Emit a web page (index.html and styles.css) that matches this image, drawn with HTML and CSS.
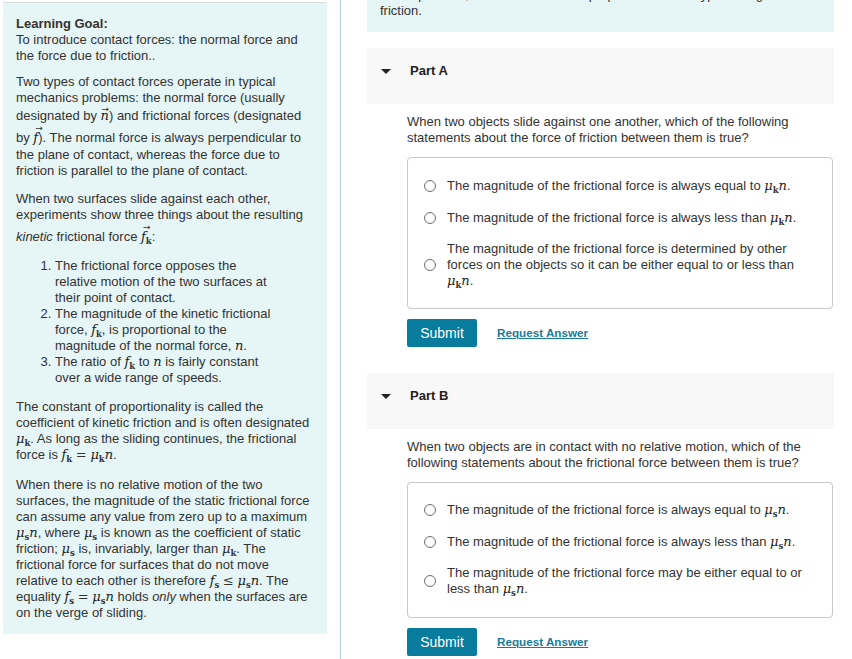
FILE: index.html
```html
<!DOCTYPE html>
<html lang="en">
<head>
<meta charset="utf-8">
<title>Contact forces</title>
<link rel="stylesheet" href="styles.css">
</head>
<body>
<div class="page">
  <aside class="left">
    <div class="goal">
      <p class="intro"><b>Learning Goal:</b><br>To introduce contact forces: the normal force and the force due to friction..</p>
      <p>Two types of contact forces operate in typical mechanics problems: the normal force (usually designated by <span class="vec"><span class="mi">n</span></span>) and frictional forces (designated by <span class="vec vec-f"><span class="mi">f</span></span>). The normal force is always perpendicular to the plane of contact, whereas the force due to friction is parallel to the plane of contact.</p>
      <p>When two surfaces slide against each other, experiments show three things about the resulting <i>kinetic</i> frictional force <span class="vec vec-f"><span class="mi">f</span></span><sub>k</sub>:</p>
      <ol class="facts">
        <li>The frictional force opposes the relative motion of the two surfaces at their point of contact.</li>
        <li>The magnitude of the kinetic frictional force, <span class="mi">f</span><sub>k</sub>, is proportional to the magnitude of the normal force, <span class="mi">n</span>.</li>
        <li>The ratio of <span class="mi">f</span><sub>k</sub> to <span class="mi">n</span> is fairly constant over a wide range of speeds.</li>
      </ol>
      <p class="kinetic">The constant of proportionality is called the coefficient of kinetic friction and is often designated <span class="mi">μ</span><sub>k</sub>. As long as the sliding continues, the frictional force is <span class="mi">f</span><sub>k</sub> <span class="mo">=</span> <span class="mi">μ</span><sub>k</sub><span class="mi">n</span>.</p>
      <p>When there is no relative motion of the two surfaces, the magnitude of the static frictional force can assume any value from zero up to a maximum <span class="mi">μ</span><sub>s</sub><span class="mi">n</span>, where <span class="mi">μ</span><sub>s</sub> is known as the coefficient of static friction; <span class="mi">μ</span><sub>s</sub> is, invariably, larger than <span class="mi">μ</span><sub>k</sub>. The frictional force for surfaces that do not move relative to each other is therefore <span class="mi">f</span><sub>s</sub> <span class="mo">≤</span> <span class="mi">μ</span><sub>s</sub><span class="mi">n</span>. The equality <span class="mi">f</span><sub>s</sub> <span class="mo">=</span> <span class="mi">μ</span><sub>s</sub><span class="mi">n</span> holds <i>only</i> when the surfaces are on the verge of sliding.</p>
    </div>
  </aside>

  <main class="right">
    <div class="note">
      <p>In this problem, we will examine the properties and the typical magnitudes of</p>
      <p>friction.</p>
    </div>

    <section class="part">
      <div class="part-head"><span class="tri"></span>Part A</div>
      <div class="part-body">
        <p class="q">When two objects slide against one another, which of the following statements about the force of friction between them is true?</p>
        <div class="options options-a">
          <label class="opt"><span class="radio"></span><span class="opt-text">The magnitude of the frictional force is always equal to <span class="mi">μ</span><sub>k</sub><span class="mi">n</span>.</span></label>
          <label class="opt"><span class="radio"></span><span class="opt-text">The magnitude of the frictional force is always less than <span class="mi">μ</span><sub>k</sub><span class="mi">n</span>.</span></label>
          <label class="opt"><span class="radio"></span><span class="opt-text">The magnitude of the frictional force is determined by other forces on the objects so it can be either equal to or less than <span class="mi">μ</span><sub>k</sub><span class="mi">n</span>.</span></label>
        </div>
        <div class="actions">
          <button class="submit" type="button">Submit</button>
          <a class="req" href="#">Request Answer</a>
        </div>
      </div>
    </section>

    <section class="part part-b">
      <div class="part-head"><span class="tri"></span>Part B</div>
      <div class="part-body">
        <p class="q">When two objects are in contact with no relative motion, which of the following statements about the frictional force between them is true?</p>
        <div class="options options-b">
          <label class="opt"><span class="radio"></span><span class="opt-text">The magnitude of the frictional force is always equal to <span class="mi">μ</span><sub>s</sub><span class="mi">n</span>.</span></label>
          <label class="opt"><span class="radio"></span><span class="opt-text">The magnitude of the frictional force is always less than <span class="mi">μ</span><sub>s</sub><span class="mi">n</span>.</span></label>
          <label class="opt"><span class="radio"></span><span class="opt-text">The magnitude of the frictional force may be either equal to or less than <span class="mi">μ</span><sub>s</sub><span class="mi">n</span>.</span></label>
        </div>
        <div class="actions">
          <button class="submit" type="button">Submit</button>
          <a class="req" href="#">Request Answer</a>
        </div>
      </div>
    </section>
  </main>
</div>
</body>
</html>
```

FILE: styles.css
```css
* { box-sizing: content-box; }

body {
  margin: 0;
  font-family: "Liberation Sans", Arial, sans-serif;
  font-size: 13px;
  line-height: 16px;
  color: #333;
  background: #fff;
}

p { margin: 0; }

.page {
  display: flex;
  height: 659px;
  overflow: hidden;
}

/* left column */
.left {
  flex: none;
  width: 337px;
  padding: 2px 0 0 3px;
  border-right: 1px solid #b9cde0;
}

.goal {
  width: 298px;
  padding: 13px 13px 13px;
  background: #e6f5f6;
  border-top: 1px solid #d9dcdc;
}

.goal p { margin-bottom: 12px; }
.goal p.intro { margin-bottom: 10px; }
.goal p.kinetic { margin-bottom: 14px; }
.goal p:last-child { margin-bottom: 0; }

.facts {
  margin: 12px 0 13px;
  padding-left: 39px;
  width: 220px;
}

/* math */
.mi {
  font-family: "DejaVu Serif", "Liberation Serif", serif;
  font-style: italic;
  font-size: 13px;
  line-height: 0;
  color: #222;
}

.mo {
  font-family: "DejaVu Serif", "Liberation Serif", serif;
  font-size: 13px;
  line-height: 0;
}

sub {
  font-family: "DejaVu Serif", "Liberation Serif", serif;
  font-weight: bold;
  font-size: 8.5px;
  line-height: 0;
  vertical-align: -3px;
}

.vec {
  display: inline-block;
  position: relative;
  line-height: 14px;
  padding-top: 3px;
}

.vec::before {
  content: "\2192";
  position: absolute;
  left: 1px;
  top: -1px;
  font-family: "DejaVu Sans", sans-serif;
  font-size: 9px;
  font-style: normal;
  line-height: 9px;
}

.vec-f { padding: 7px 0 2px; }
.vec-f::before { left: 2px; top: 0; }

/* right column */
.right {
  flex: none;
  width: 467px;
  padding-left: 26px;
}

.note {
  margin-top: -26px;
  padding: 13px;
  background: #e6f5f6;
}

.part { margin-top: 16px; }
.part-b { margin-top: 26px; }

.part-head {
  display: flex;
  align-items: center;
  padding: 15px 0 25px 14px;
  background: #f8f8f8;
  font-weight: bold;
  color: #222;
}

.tri {
  width: 0;
  height: 0;
  border-left: 5px solid transparent;
  border-right: 5px solid transparent;
  border-top: 5px solid #222;
  margin-right: 19px;
}

.part-body { padding: 10px 1px 0 40px; }

.q { margin-bottom: 11px; }

.options {
  display: flex;
  flex-direction: column;
  gap: 15.5px;
  padding: 20px 24px 19px 16px;
  border: 1px solid #c8c8c8;
  border-radius: 4px;
}

.options-b { padding-top: 19px; padding-bottom: 20px; }

.opt {
  display: flex;
  align-items: center;
  gap: 11px;
}

.radio {
  flex: none;
  width: 10px;
  height: 10px;
  border: 1.5px solid #6e6e6e;
  border-radius: 50%;
  background: #fff;
}

.actions {
  display: flex;
  align-items: center;
  margin-top: 10px;
}

.submit {
  width: 70px;
  height: 28px;
  padding: 0;
  border: none;
  border-radius: 2px;
  background: #087c9c;
  color: #fff;
  font-family: "Liberation Sans", Arial, sans-serif;
  font-size: 14px;
}

.req {
  margin-left: 20px;
  color: #1a7a9c;
  font-weight: bold;
  font-size: 11.7px;
  text-decoration: underline;
}
```
